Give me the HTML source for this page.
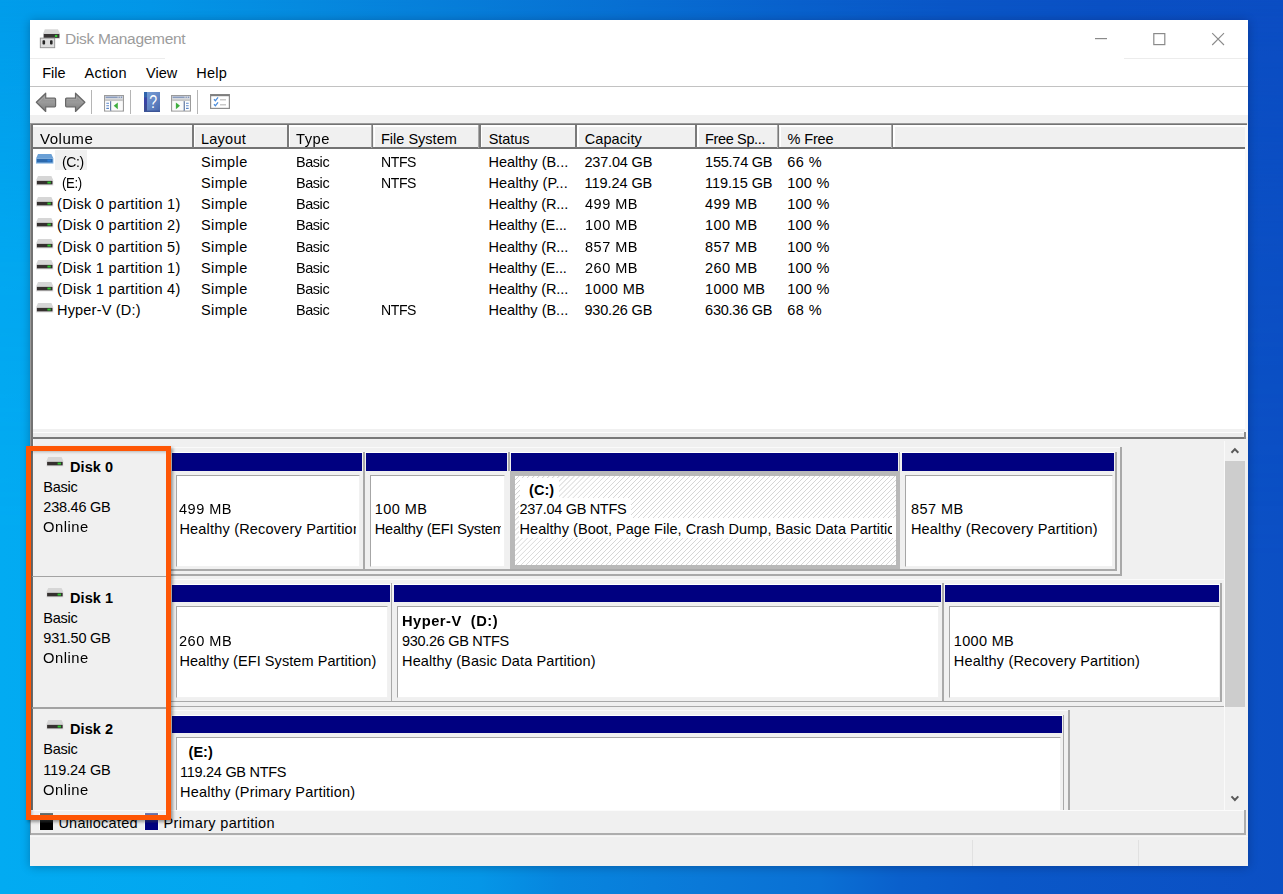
<!DOCTYPE html><html lang="en"><head><meta charset="utf-8"><title>Disk Management</title><style>

html,body{margin:0;padding:0}
body{width:1283px;height:894px;overflow:hidden;position:relative;font-family:"Liberation Sans",sans-serif;font-size:14.5px;color:#000;background:#0a62cc}
#root{position:absolute;left:0;top:0;width:1283px;height:894px;overflow:hidden}
#root div,#root svg{position:absolute}
#root span.t{position:absolute;white-space:pre;line-height:20px;height:20px}
#root div.c{overflow:hidden}

</style></head><body><div id="root">
<div style="left:0;top:0;width:1283px;height:894px;background:linear-gradient(to right,#019deb 0px,#0396e7 150px,#068adf 300px,#077fda 430px,#086ed2 640px,#0960cc 800px,#0a56c7 950px,#0a50c4 1100px,#0b4dc3 1283px)"></div>
<div style="left:0;top:0;width:1283px;height:894px;background:linear-gradient(to right,#02abf2 0px,#03a4ee 300px,#0596e7 480px,#0785de 560px,#0a79d8 700px,#0a70d4 820px,#0a60cc 900px,#0a58c8 1000px,#0b4fc4 1283px);-webkit-mask-image:linear-gradient(to bottom,rgba(0,0,0,0) 0px,rgba(0,0,0,.75) 260px,rgba(0,0,0,1) 560px);mask-image:linear-gradient(to bottom,rgba(0,0,0,0) 0px,rgba(0,0,0,.75) 260px,rgba(0,0,0,1) 560px)"></div>
<div style="left:30px;top:20px;width:1218px;height:846px;background:#fff;box-shadow:0 1px 9px rgba(0,0,30,.28)"></div>
<div style="left:30px;top:58px;width:135px;height:1px;background:#ececec;"></div>
<div style="left:1124px;top:58px;width:124px;height:1px;background:#ececec;"></div>
<div style="left:30px;top:85.6px;width:1218px;height:1.6px;background:#c2c2c2;"></div>
<div style="left:30px;top:115px;width:1218px;height:751px;background:#f0f0f0;"></div>
<svg style="left:1090px;top:28px" width="140" height="22" viewBox="0 0 140 22"><path d="M5 10.6H17" stroke="#8a8a8a" stroke-width="1.2" fill="none"/><rect x="63.8" y="5.6" width="11" height="11" stroke="#8a8a8a" stroke-width="1.2" fill="none"/><path d="M122.2 5.2L134 17M134 5.2L122.2 17" stroke="#8a8a8a" stroke-width="1.1" fill="none"/></svg>
<div style="left:91.2px;top:89.5px;width:1.2px;height:24.5px;background:#b5b5b5;"></div>
<div style="left:130.0px;top:89.5px;width:1.2px;height:24.5px;background:#b5b5b5;"></div>
<div style="left:197.3px;top:89.5px;width:1.2px;height:24.5px;background:#b5b5b5;"></div>
<div style="left:33px;top:125px;width:1212.3px;height:303.8px;background:#fff;"></div>
<div style="left:1245.3px;top:125px;width:2.7px;height:312px;background:#f9f9f9;"></div>
<div style="left:30.4px;top:123px;width:1216.2px;height:1px;background:#9a9a9a;"></div>
<div style="left:31.2px;top:123.6px;width:1215.4px;height:1.6px;background:#737373;"></div>
<div style="left:30.4px;top:123px;width:1px;height:712px;background:#9a9a9a;"></div>
<div style="left:31.2px;top:123.6px;width:1.5px;height:711.4px;background:#737373;"></div>
<div style="left:32.699999999999996px;top:432px;width:1px;height:378px;background:#fafafa;"></div>
<div style="left:33px;top:127.2px;width:1212.3px;height:20.4px;background:#f0f0f0;"></div>
<div style="left:33px;top:146.9px;width:1212.3px;height:2.1px;background:#737373;"></div>
<div style="left:191.5px;top:125.2px;width:1px;height:22.4px;background:#a9a9a9;"></div>
<div style="left:192.1px;top:125.2px;width:1.8px;height:22.4px;background:#7a7a7a;"></div>
<div style="left:193.9px;top:125.2px;width:1.4px;height:21.8px;background:#fff;"></div>
<div style="left:286.7px;top:125.2px;width:1px;height:22.4px;background:#a9a9a9;"></div>
<div style="left:287.3px;top:125.2px;width:1.8px;height:22.4px;background:#7a7a7a;"></div>
<div style="left:289.1px;top:125.2px;width:1.4px;height:21.8px;background:#fff;"></div>
<div style="left:371.09999999999997px;top:125.2px;width:1px;height:22.4px;background:#a9a9a9;"></div>
<div style="left:371.7px;top:125.2px;width:1.8px;height:22.4px;background:#7a7a7a;"></div>
<div style="left:373.5px;top:125.2px;width:1.4px;height:21.8px;background:#fff;"></div>
<div style="left:478.29999999999995px;top:125.2px;width:1px;height:22.4px;background:#a9a9a9;"></div>
<div style="left:478.9px;top:125.2px;width:1.8px;height:22.4px;background:#7a7a7a;"></div>
<div style="left:480.7px;top:125.2px;width:1.4px;height:21.8px;background:#fff;"></div>
<div style="left:574.8px;top:125.2px;width:1px;height:22.4px;background:#a9a9a9;"></div>
<div style="left:575.4px;top:125.2px;width:1.8px;height:22.4px;background:#7a7a7a;"></div>
<div style="left:577.1999999999999px;top:125.2px;width:1.4px;height:21.8px;background:#fff;"></div>
<div style="left:694.8px;top:125.2px;width:1px;height:22.4px;background:#a9a9a9;"></div>
<div style="left:695.4px;top:125.2px;width:1.8px;height:22.4px;background:#7a7a7a;"></div>
<div style="left:697.1999999999999px;top:125.2px;width:1.4px;height:21.8px;background:#fff;"></div>
<div style="left:777.1px;top:125.2px;width:1px;height:22.4px;background:#a9a9a9;"></div>
<div style="left:777.7px;top:125.2px;width:1.8px;height:22.4px;background:#7a7a7a;"></div>
<div style="left:779.5px;top:125.2px;width:1.4px;height:21.8px;background:#fff;"></div>
<div style="left:891.0px;top:125.2px;width:1px;height:22.4px;background:#a9a9a9;"></div>
<div style="left:891.6px;top:125.2px;width:1.8px;height:22.4px;background:#7a7a7a;"></div>
<div style="left:893.4px;top:125.2px;width:1.4px;height:21.8px;background:#fff;"></div>
<div style="left:55px;top:150.2px;width:32.4px;height:20px;background:#f0f0f0;"></div>
<div style="left:32.6px;top:433px;width:1212px;height:4.4px;background:#ececec;"></div>
<div style="left:32px;top:437.4px;width:1214px;height:1.8px;background:#787878;"></div>
<div style="left:1244.4px;top:432px;width:1.8px;height:7px;background:#8c8c8c;"></div>
<div style="left:32.6px;top:432px;width:1211.4px;height:1px;background:#fcfcfc;"></div>
<div style="left:31.6px;top:575.6px;width:136.4px;height:1.8px;background:#a3a3a3;"></div>
<div style="left:31.6px;top:706.8px;width:136.4px;height:1.8px;background:#a3a3a3;"></div>
<div style="left:171px;top:447.4px;width:950.0px;height:1px;background:#fafafa;"></div>
<div style="left:171px;top:452.2px;width:945.0px;height:1px;background:#fff;"></div>
<div style="left:172.0px;top:453.2px;width:190.0px;height:17.6px;background:#000080;"></div>
<div style="left:175.6px;top:474.7px;width:184.6px;height:92.1px;background:#fff;box-sizing:border-box;border-left:1.4px solid #a6a6a6;border-top:1.4px solid #a6a6a6;border-right:1.4px solid #f1f1f1;border-bottom:1.4px solid #f1f1f1"></div>
<div style="left:363.2px;top:452.0px;width:1.6px;height:118.6px;background:#a9a9a9;"></div>
<div style="left:366.0px;top:453.2px;width:140.9px;height:17.6px;background:#000080;"></div>
<div style="left:369.6px;top:474.7px;width:135.5px;height:92.1px;background:#fff;box-sizing:border-box;border-left:1.4px solid #a6a6a6;border-top:1.4px solid #a6a6a6;border-right:1.4px solid #f1f1f1;border-bottom:1.4px solid #f1f1f1"></div>
<div style="left:508.1px;top:452.0px;width:1.6px;height:19.2px;background:#a9a9a9;"></div>
<div style="left:510.9px;top:453.2px;width:386.7px;height:17.6px;background:#000080;"></div>
<div style="left:509.6px;top:471.2px;width:390.3px;height:98.8px;background:repeating-linear-gradient(135deg,#fff 0px,#fff 2.75px,#d6d6d6 2.8px,#d6d6d6 3.44px,#fff 3.54px);box-sizing:border-box;border:5px solid #b9b9b9;border-right-width:4px"></div>
<div style="left:899.0px;top:452.0px;width:1px;height:19.2px;background:#a9a9a9;"></div>
<div style="left:901.6px;top:453.2px;width:212.4px;height:17.6px;background:#000080;"></div>
<div style="left:905.2px;top:474.7px;width:208.3px;height:92.1px;background:#fff;box-sizing:border-box;border-left:1.4px solid #a6a6a6;border-top:1.4px solid #a6a6a6;border-right:1.4px solid #f1f1f1;border-bottom:1.4px solid #f1f1f1"></div>
<div style="left:1115.2px;top:452.0px;width:1.6px;height:118.6px;background:#a9a9a9;"></div>
<div style="left:171px;top:569.2px;width:945.8px;height:1.5px;background:#a9a9a9;"></div>
<div style="left:171px;top:574.2px;width:950.8px;height:1.5px;background:#a9a9a9;"></div>
<div style="left:1120.2px;top:447.4px;width:1.6px;height:128.3px;background:#a9a9a9;"></div>
<div style="left:171px;top:578.7px;width:1053.6px;height:1px;background:#fafafa;"></div>
<div style="left:171px;top:583.5px;width:1050.1px;height:1px;background:#fff;"></div>
<div style="left:172.0px;top:584.5px;width:217.7px;height:17.6px;background:#000080;"></div>
<div style="left:175.6px;top:606.0px;width:212.3px;height:92.1px;background:#fff;box-sizing:border-box;border-left:1.4px solid #a6a6a6;border-top:1.4px solid #a6a6a6;border-right:1.4px solid #f1f1f1;border-bottom:1.4px solid #f1f1f1"></div>
<div style="left:390.9px;top:583.3px;width:1.6px;height:118.6px;background:#a9a9a9;"></div>
<div style="left:393.7px;top:584.5px;width:547.5px;height:17.6px;background:#000080;"></div>
<div style="left:397.3px;top:606.0px;width:542.1px;height:92.1px;background:#fff;box-sizing:border-box;border-left:1.4px solid #a6a6a6;border-top:1.4px solid #a6a6a6;border-right:1.4px solid #f1f1f1;border-bottom:1.4px solid #f1f1f1"></div>
<div style="left:942.4px;top:583.3px;width:1.6px;height:118.6px;background:#a9a9a9;"></div>
<div style="left:945.2px;top:584.5px;width:273.9px;height:17.6px;background:#000080;"></div>
<div style="left:948.8px;top:606.0px;width:271.5px;height:92.1px;background:#fff;box-sizing:border-box;border-left:1.4px solid #a6a6a6;border-top:1.4px solid #a6a6a6;border-right:1.4px solid #f1f1f1;border-bottom:1.4px solid #f1f1f1"></div>
<div style="left:1220.3px;top:583.3px;width:1.6px;height:118.6px;background:#a9a9a9;"></div>
<div style="left:171px;top:700.5px;width:1050.9px;height:1.5px;background:#a9a9a9;"></div>
<div style="left:171px;top:705.5px;width:1053.4px;height:1.5px;background:#a9a9a9;"></div>
<div class="c" style="left:171px;top:700px;width:1054px;height:110.4px">
<div style="left:0.0px;top:10.0px;width:897.8px;height:1px;background:#fafafa;"></div>
<div style="left:0.0px;top:14.8px;width:892.6px;height:1px;background:#fff;"></div>
<div style="left:1.0px;top:15.8px;width:889.6px;height:17.6px;background:#000080;"></div>
<div style="left:4.6px;top:37.3px;width:885.5px;height:92.1px;background:#fff;box-sizing:border-box;border-left:1.4px solid #a6a6a6;border-top:1.4px solid #a6a6a6;border-right:1.4px solid #f1f1f1;border-bottom:1.4px solid #f1f1f1"></div>
<div style="left:891.8px;top:14.6px;width:1.6px;height:118.6px;background:#a9a9a9;"></div>
<div style="left:0.0px;top:131.8px;width:893.4px;height:1.5px;background:#a9a9a9;"></div>
<div style="left:0.0px;top:136.8px;width:898.6px;height:1.5px;background:#a9a9a9;"></div>
<div style="left:897.0px;top:10.0px;width:1.6px;height:128.3px;background:#a9a9a9;"></div>
</div>
<div style="left:520px;top:478.2px;width:38.7px;height:19.8px;background:#fff;"></div>
<div style="left:519.4px;top:498px;width:111.8px;height:20.4px;background:#fff;"></div>
<div style="left:519.4px;top:518.4px;width:376.4px;height:20px;background:#fff;"></div>
<div style="left:1224.8px;top:440px;width:20.2px;height:370.4px;background:#f0f0f0;"></div>
<div style="left:1224.8px;top:461px;width:20.2px;height:246px;background:#cdcdcd;"></div>
<div style="left:1223.8px;top:441px;width:1px;height:369px;background:#fafafa;"></div>
<svg style="left:1224.8px;top:440px" width="20" height="370" viewBox="0 0 20 370"><path d="M6.5 12.7L9.9 9.1L13.3 12.7" stroke="#595959" stroke-width="2" fill="none"/><path d="M6.5 356.4L9.9 360L13.3 356.4" stroke="#595959" stroke-width="2" fill="none"/></svg>
<div style="left:31.4px;top:810.4px;width:1213.4px;height:23px;background:#f0f0f0;"></div>
<div style="left:31px;top:833.2px;width:1215px;height:1.8px;background:#adadad;"></div>
<div style="left:1244.4px;top:810.4px;width:1.8px;height:24.6px;background:#adadad;"></div>
<div style="left:31.4px;top:809.9px;width:1213.0px;height:1px;background:#fbfbfb;"></div>
<div style="left:38.6px;top:812.6px;width:14.8px;height:17.8px;background:#fbfbfb;"></div>
<div style="left:143.8px;top:812.6px;width:14.8px;height:17.8px;background:#fbfbfb;"></div>
<div style="left:39.5px;top:813.4px;width:13.1px;height:16.2px;background:linear-gradient(to bottom,#6e7a7a 0%,#3c4242 35%,#000 62%);"></div>
<div style="left:144.7px;top:813.4px;width:13.1px;height:16.2px;background:linear-gradient(to bottom,#7880b0 0%,#3c4298 35%,#000080 62%);"></div>
<div style="left:972px;top:840px;width:1px;height:26px;background:#e1e1e1;"></div>
<div style="left:1138px;top:840px;width:1px;height:26px;background:#e1e1e1;"></div>
<div style="left:30px;top:836px;width:1218px;height:1px;background:#f7f7f7;"></div>
<svg style="left:39px;top:28px" width="22" height="21" viewBox="0 0 22 21"><path d="M5.8 1.2H19L20.9 5.6V10.4H4.2V5.6Z" fill="#d7d7d7"/><path d="M4.2 5.7H20.9V10.4H4.2Z" fill="#c9c9c9"/><path d="M4.8 6H20.3V9.9H4.8Z" fill="#383435"/><rect x="15.9" y="6.9" width="2.4" height="2.2" fill="#35cc35"/><rect x="1.3" y="10.1" width="14.4" height="9.6" fill="#dedede" stroke="#8f8f8f" stroke-width=".9"/><rect x="3.5" y="12.2" width="2.6" height="4.2" rx=".9" fill="#262626"/><rect x="11" y="12.2" width="2.6" height="4.2" rx=".9" fill="#262626"/></svg>
<svg width="0" height="0" style="left:0;top:0"><defs><linearGradient id="ag" x1="0" y1="0" x2="0" y2="1"><stop offset="0" stop-color="#8e8e8e"/><stop offset=".5" stop-color="#9a9a9a"/><stop offset="1" stop-color="#7c7c7c"/></linearGradient></defs></svg>
<svg style="left:35px;top:92px" width="22" height="21" viewBox="0 0 22 21"><path d="M1.3 10.3L10.7 1.2V6.2H19.6Q20.6 6.2 20.6 7.2V13.8Q20.6 14.8 19.6 14.8H10.7V19.5Z" fill="url(#ag)" stroke="#686868" stroke-width="1.2" stroke-linejoin="round"/><path d="M3.6 10.3L9.6 4.4V7.4H19.2" stroke="#a8a8a8" stroke-width=".8" fill="none"/></svg>
<svg style="left:64px;top:92px" width="22" height="21" viewBox="0 0 22 21"><path d="M20.9 10.3L11.5 1.2V6.2H2.6Q1.6 6.2 1.6 7.2V13.8Q1.6 14.8 2.6 14.8H11.5V19.5Z" fill="url(#ag)" stroke="#686868" stroke-width="1.2" stroke-linejoin="round"/><path d="M3 7.4H12.6V4.4L18.6 10.3" stroke="#a8a8a8" stroke-width=".8" fill="none"/></svg>
<svg style="left:103.8px;top:95.4px" width="20" height="16.6" viewBox="0 0 20 16.6"><rect x=".6" y=".6" width="18.8" height="15.4" fill="#f4f4f4" stroke="#9b9b9b" stroke-width="1.2"/><rect x="1.2" y="1.2" width="17.6" height="3.6" fill="#d5d8de"/><path d="M1.6 2.2H13.6" stroke="#5b78ad" stroke-width=".9"/><path d="M14.6 2.2H15.8M16.8 2.2H18.2" stroke="#5b78ad" stroke-width="1"/><rect x="1.2" y="4.2" width="17.6" height="2" fill="#c6c6c6"/><rect x="1.2" y="6.2" width="5" height="9.2" fill="#fff"/><rect x="6.1" y="6.2" width="1.3" height="9.4" fill="#556e9c"/><rect x="7.4" y="6.2" width="11.2" height="9.2" fill="#fafafa"/><path d="M2.3 8.2H5M2.3 10.8H5M2.3 13.4H5" stroke="#5b86c9" stroke-width="1.1"/><path d="M9.7 10.8L13.8 7.4V14.2Z" fill="#3fae3f"/></svg>
<svg style="left:171.2px;top:95.4px" width="20" height="16.6" viewBox="0 0 20 16.6"><rect x=".6" y=".6" width="18.8" height="15.4" fill="#f4f4f4" stroke="#9b9b9b" stroke-width="1.2"/><rect x="1.2" y="1.2" width="17.6" height="3.6" fill="#d5d8de"/><path d="M1.6 2.2H13.6" stroke="#5b78ad" stroke-width=".9"/><path d="M14.6 2.2H15.8M16.8 2.2H18.2" stroke="#5b78ad" stroke-width="1"/><rect x="1.2" y="4.2" width="17.6" height="2" fill="#c6c6c6"/><rect x="13.8" y="6.2" width="5" height="9.2" fill="#fff"/><rect x="12.5" y="6.2" width="1.3" height="9.4" fill="#556e9c"/><rect x="1.4" y="6.2" width="11" height="9.2" fill="#fafafa"/><path d="M15 8.2H17.7M15 10.8H17.7M15 13.4H17.7" stroke="#5b86c9" stroke-width="1.1"/><path d="M9 10.8L4.9 7.4V14.2Z" fill="#3fae3f"/></svg>
<svg style="left:143.8px;top:91.8px" width="16.4" height="20" viewBox="0 0 16.4 20"><defs><linearGradient id="hg" x1="0" y1="0" x2="1" y2="1"><stop offset="0" stop-color="#7aa0d6"/><stop offset=".55" stop-color="#6285c4"/><stop offset="1" stop-color="#4564aa"/></linearGradient></defs><rect width="16.4" height="20" fill="url(#hg)"/><rect width="3" height="20" fill="#3a44a4"/><rect width="3" height="5.4" fill="#2f64ac"/><rect y="12.4" width="3" height="7.6" fill="#3b4a94"/><rect y="18.6" width="16.4" height="1.4" fill="#3c5596"/><text transform="translate(9.1 16.5) scale(.76 1)" font-family="Liberation Sans,sans-serif" font-size="18.6" fill="#fff" text-anchor="middle">?</text></svg>
<svg style="left:210px;top:94.2px" width="20" height="15" viewBox="0 0 20 15"><rect x=".6" y=".6" width="18.8" height="13.8" fill="#fff" stroke="#8d8d8d" stroke-width="1.2"/><rect x=".6" y=".4" width="18.8" height="1.8" fill="#7f7f7f"/><path d="M4 5.2L5.4 6.8L8 3.4M4 10.2L5.4 11.8L8 8.4" stroke="#4c8ddb" stroke-width="1.3" fill="none"/><path d="M10 5.8H16M10 10.8H16" stroke="#c9c9c9" stroke-width="1.4"/></svg>
<svg style="left:36.3px;top:154.3px" width="17.4" height="10.4" viewBox="0 0 17.4 10.4"><path d="M2 0H15.4L17.4 4.6H0Z" fill="#6aa0d6"/><rect x="0" y="4.4" width="17.4" height="5.2" fill="#7fb0e0"/><rect x=".9" y="4.8" width="15.6" height="3.6" fill="#2b69ad"/><rect x="11.4" y="5.6" width="3.4" height="1.9" fill="#2f7fd8"/></svg>
<svg style="left:36.3px;top:175.5px" width="17.4" height="10.4" viewBox="0 0 17.4 10.4"><path d="M2 0H15.4L17.4 4.6H0Z" fill="#d6d6d6"/><rect x="0" y="4.4" width="17.4" height="5.2" fill="#e4e4e4"/><rect x=".9" y="4.8" width="15.6" height="3.6" fill="#35302f"/><rect x="11.4" y="5.6" width="3.4" height="1.9" fill="#2fc52f"/></svg>
<svg style="left:36.3px;top:196.7px" width="17.4" height="10.4" viewBox="0 0 17.4 10.4"><path d="M2 0H15.4L17.4 4.6H0Z" fill="#d6d6d6"/><rect x="0" y="4.4" width="17.4" height="5.2" fill="#e4e4e4"/><rect x=".9" y="4.8" width="15.6" height="3.6" fill="#35302f"/><rect x="11.4" y="5.6" width="3.4" height="1.9" fill="#2fc52f"/></svg>
<svg style="left:36.3px;top:217.9px" width="17.4" height="10.4" viewBox="0 0 17.4 10.4"><path d="M2 0H15.4L17.4 4.6H0Z" fill="#d6d6d6"/><rect x="0" y="4.4" width="17.4" height="5.2" fill="#e4e4e4"/><rect x=".9" y="4.8" width="15.6" height="3.6" fill="#35302f"/><rect x="11.4" y="5.6" width="3.4" height="1.9" fill="#2fc52f"/></svg>
<svg style="left:36.3px;top:239.1px" width="17.4" height="10.4" viewBox="0 0 17.4 10.4"><path d="M2 0H15.4L17.4 4.6H0Z" fill="#d6d6d6"/><rect x="0" y="4.4" width="17.4" height="5.2" fill="#e4e4e4"/><rect x=".9" y="4.8" width="15.6" height="3.6" fill="#35302f"/><rect x="11.4" y="5.6" width="3.4" height="1.9" fill="#2fc52f"/></svg>
<svg style="left:36.3px;top:260.3px" width="17.4" height="10.4" viewBox="0 0 17.4 10.4"><path d="M2 0H15.4L17.4 4.6H0Z" fill="#d6d6d6"/><rect x="0" y="4.4" width="17.4" height="5.2" fill="#e4e4e4"/><rect x=".9" y="4.8" width="15.6" height="3.6" fill="#35302f"/><rect x="11.4" y="5.6" width="3.4" height="1.9" fill="#2fc52f"/></svg>
<svg style="left:36.3px;top:281.5px" width="17.4" height="10.4" viewBox="0 0 17.4 10.4"><path d="M2 0H15.4L17.4 4.6H0Z" fill="#d6d6d6"/><rect x="0" y="4.4" width="17.4" height="5.2" fill="#e4e4e4"/><rect x=".9" y="4.8" width="15.6" height="3.6" fill="#35302f"/><rect x="11.4" y="5.6" width="3.4" height="1.9" fill="#2fc52f"/></svg>
<svg style="left:36.3px;top:302.7px" width="17.4" height="10.4" viewBox="0 0 17.4 10.4"><path d="M2 0H15.4L17.4 4.6H0Z" fill="#d6d6d6"/><rect x="0" y="4.4" width="17.4" height="5.2" fill="#e4e4e4"/><rect x=".9" y="4.8" width="15.6" height="3.6" fill="#35302f"/><rect x="11.4" y="5.6" width="3.4" height="1.9" fill="#2fc52f"/></svg>
<svg style="left:46.3px;top:457.2px" width="17.8" height="10.4" viewBox="0 0 17.4 10.4"><path d="M2 0H15.4L17.4 4.6H0Z" fill="#d6d6d6"/><rect x="0" y="4.4" width="17.4" height="5.2" fill="#e4e4e4"/><rect x=".9" y="4.8" width="15.6" height="3.6" fill="#35302f"/><rect x="11.4" y="5.6" width="3.4" height="1.9" fill="#2fc52f"/></svg>
<svg style="left:46.3px;top:588.4px" width="17.8" height="10.4" viewBox="0 0 17.4 10.4"><path d="M2 0H15.4L17.4 4.6H0Z" fill="#d6d6d6"/><rect x="0" y="4.4" width="17.4" height="5.2" fill="#e4e4e4"/><rect x=".9" y="4.8" width="15.6" height="3.6" fill="#35302f"/><rect x="11.4" y="5.6" width="3.4" height="1.9" fill="#2fc52f"/></svg>
<svg style="left:46.3px;top:719.6px" width="17.8" height="10.4" viewBox="0 0 17.4 10.4"><path d="M2 0H15.4L17.4 4.6H0Z" fill="#d6d6d6"/><rect x="0" y="4.4" width="17.4" height="5.2" fill="#e4e4e4"/><rect x=".9" y="4.8" width="15.6" height="3.6" fill="#35302f"/><rect x="11.4" y="5.6" width="3.4" height="1.9" fill="#2fc52f"/></svg>
<span class="t" id="t0" style="left:65.0px;top:29.1px;font-size:15.5px;color:#9c9c9c;letter-spacing:-0.309px;">Disk Management</span>
<span class="t" id="t1" style="left:42.2px;top:63.0px;letter-spacing:0.008px;">File</span>
<span class="t" id="t2" style="left:84.6px;top:63.0px;letter-spacing:0.338px;">Action</span>
<span class="t" id="t3" style="left:146.0px;top:63.0px;letter-spacing:0.009px;">View</span>
<span class="t" id="t4" style="left:196.2px;top:63.0px;letter-spacing:0.257px;">Help</span>
<span class="t" id="t5" style="left:39.6px;top:128.8px;transform:scaleX(1.0399);transform-origin:0 50%;letter-spacing:0.480px;">Volume</span>
<span class="t" id="t6" style="left:200.9px;top:128.8px;letter-spacing:0.271px;">Layout</span>
<span class="t" id="t7" style="left:295.9px;top:128.8px;transform:scaleX(1.0159);transform-origin:0 50%;letter-spacing:0.480px;">Type</span>
<span class="t" id="t8" style="left:381.0px;top:128.8px;letter-spacing:0.005px;">File System</span>
<span class="t" id="t9" style="left:488.7px;top:128.8px;letter-spacing:-0.042px;">Status</span>
<span class="t" id="t10" style="left:584.7px;top:128.8px;letter-spacing:0.097px;">Capacity</span>
<span class="t" id="t11" style="left:705.1px;top:128.8px;letter-spacing:-0.364px;">Free Sp...</span>
<span class="t" id="t12" style="left:787.5px;top:128.8px;letter-spacing:-0.130px;">% Free</span>
<span class="t" id="t13" style="left:61.5px;top:151.7px;transform:scaleX(0.9646);transform-origin:0 50%;letter-spacing:-0.420px;">(C:)</span>
<span class="t" id="t14" style="left:201.0px;top:151.7px;letter-spacing:0.374px;">Simple</span>
<span class="t" id="t15" style="left:296.2px;top:151.7px;transform:scaleX(0.9944);transform-origin:0 50%;letter-spacing:-0.420px;">Basic</span>
<span class="t" id="t16" style="left:381.1px;top:151.7px;transform:scaleX(0.9700);transform-origin:0 50%;letter-spacing:-0.420px;">NTFS</span>
<span class="t" id="t17" style="left:488.5px;top:151.7px;letter-spacing:-0.007px;">Healthy (B...</span>
<span class="t" id="t18" style="left:584.5px;top:151.7px;letter-spacing:-0.191px;">237.04 GB</span>
<span class="t" id="t19" style="left:705.1px;top:151.7px;letter-spacing:-0.241px;">155.74 GB</span>
<span class="t" id="t20" style="left:787.2px;top:151.7px;letter-spacing:0.446px;">66 %</span>
<span class="t" id="t21" style="left:61.5px;top:172.9px;transform:scaleX(0.9095);transform-origin:0 50%;letter-spacing:-0.420px;">(E:)</span>
<span class="t" id="t22" style="left:201.0px;top:172.9px;letter-spacing:0.374px;">Simple</span>
<span class="t" id="t23" style="left:296.2px;top:172.9px;transform:scaleX(0.9944);transform-origin:0 50%;letter-spacing:-0.420px;">Basic</span>
<span class="t" id="t24" style="left:381.1px;top:172.9px;transform:scaleX(0.9700);transform-origin:0 50%;letter-spacing:-0.420px;">NTFS</span>
<span class="t" id="t25" style="left:488.5px;top:172.9px;letter-spacing:0.107px;">Healthy (P...</span>
<span class="t" id="t26" style="left:584.5px;top:172.9px;letter-spacing:-0.058px;">119.24 GB</span>
<span class="t" id="t27" style="left:705.1px;top:172.9px;letter-spacing:-0.108px;">119.15 GB</span>
<span class="t" id="t28" style="left:787.2px;top:172.9px;letter-spacing:0.269px;">100 %</span>
<span class="t" id="t29" style="left:57.0px;top:194.1px;letter-spacing:0.297px;">(Disk 0 partition 1)</span>
<span class="t" id="t30" style="left:201.0px;top:194.1px;letter-spacing:0.374px;">Simple</span>
<span class="t" id="t31" style="left:296.2px;top:194.1px;transform:scaleX(0.9944);transform-origin:0 50%;letter-spacing:-0.420px;">Basic</span>
<span class="t" id="t32" style="left:488.5px;top:194.1px;letter-spacing:-0.066px;">Healthy (R...</span>
<span class="t" id="t33" style="left:584.5px;top:194.1px;transform:scaleX(1.0022);transform-origin:0 50%;letter-spacing:0.480px;">499 MB</span>
<span class="t" id="t34" style="left:705.1px;top:194.1px;letter-spacing:0.423px;">499 MB</span>
<span class="t" id="t35" style="left:787.2px;top:194.1px;letter-spacing:0.269px;">100 %</span>
<span class="t" id="t36" style="left:57.0px;top:215.3px;letter-spacing:0.297px;">(Disk 0 partition 2)</span>
<span class="t" id="t37" style="left:201.0px;top:215.3px;letter-spacing:0.374px;">Simple</span>
<span class="t" id="t38" style="left:296.2px;top:215.3px;transform:scaleX(0.9944);transform-origin:0 50%;letter-spacing:-0.420px;">Basic</span>
<span class="t" id="t39" style="left:488.5px;top:215.3px;letter-spacing:-0.115px;">Healthy (E...</span>
<span class="t" id="t40" style="left:584.5px;top:215.3px;transform:scaleX(1.0022);transform-origin:0 50%;letter-spacing:0.480px;">100 MB</span>
<span class="t" id="t41" style="left:705.1px;top:215.3px;letter-spacing:0.423px;">100 MB</span>
<span class="t" id="t42" style="left:787.2px;top:215.3px;letter-spacing:0.269px;">100 %</span>
<span class="t" id="t43" style="left:57.0px;top:236.5px;letter-spacing:0.297px;">(Disk 0 partition 5)</span>
<span class="t" id="t44" style="left:201.0px;top:236.5px;letter-spacing:0.374px;">Simple</span>
<span class="t" id="t45" style="left:296.2px;top:236.5px;transform:scaleX(0.9944);transform-origin:0 50%;letter-spacing:-0.420px;">Basic</span>
<span class="t" id="t46" style="left:488.5px;top:236.5px;letter-spacing:-0.066px;">Healthy (R...</span>
<span class="t" id="t47" style="left:584.5px;top:236.5px;transform:scaleX(1.0022);transform-origin:0 50%;letter-spacing:0.480px;">857 MB</span>
<span class="t" id="t48" style="left:705.1px;top:236.5px;letter-spacing:0.423px;">857 MB</span>
<span class="t" id="t49" style="left:787.2px;top:236.5px;letter-spacing:0.269px;">100 %</span>
<span class="t" id="t50" style="left:57.0px;top:257.7px;letter-spacing:0.297px;">(Disk 1 partition 1)</span>
<span class="t" id="t51" style="left:201.0px;top:257.7px;letter-spacing:0.374px;">Simple</span>
<span class="t" id="t52" style="left:296.2px;top:257.7px;transform:scaleX(0.9944);transform-origin:0 50%;letter-spacing:-0.420px;">Basic</span>
<span class="t" id="t53" style="left:488.5px;top:257.7px;letter-spacing:-0.115px;">Healthy (E...</span>
<span class="t" id="t54" style="left:584.5px;top:257.7px;transform:scaleX(1.0022);transform-origin:0 50%;letter-spacing:0.480px;">260 MB</span>
<span class="t" id="t55" style="left:705.1px;top:257.7px;letter-spacing:0.423px;">260 MB</span>
<span class="t" id="t56" style="left:787.2px;top:257.7px;letter-spacing:0.269px;">100 %</span>
<span class="t" id="t57" style="left:57.0px;top:278.9px;letter-spacing:0.297px;">(Disk 1 partition 4)</span>
<span class="t" id="t58" style="left:201.0px;top:278.9px;letter-spacing:0.374px;">Simple</span>
<span class="t" id="t59" style="left:296.2px;top:278.9px;transform:scaleX(0.9944);transform-origin:0 50%;letter-spacing:-0.420px;">Basic</span>
<span class="t" id="t60" style="left:488.5px;top:278.9px;letter-spacing:-0.066px;">Healthy (R...</span>
<span class="t" id="t61" style="left:584.5px;top:278.9px;letter-spacing:0.376px;">1000 MB</span>
<span class="t" id="t62" style="left:705.1px;top:278.9px;letter-spacing:0.309px;">1000 MB</span>
<span class="t" id="t63" style="left:787.2px;top:278.9px;letter-spacing:0.269px;">100 %</span>
<span class="t" id="t64" style="left:57.0px;top:300.1px;letter-spacing:0.193px;">Hyper-V (D:)</span>
<span class="t" id="t65" style="left:201.0px;top:300.1px;letter-spacing:0.374px;">Simple</span>
<span class="t" id="t66" style="left:296.2px;top:300.1px;transform:scaleX(0.9944);transform-origin:0 50%;letter-spacing:-0.420px;">Basic</span>
<span class="t" id="t67" style="left:381.1px;top:300.1px;transform:scaleX(0.9700);transform-origin:0 50%;letter-spacing:-0.420px;">NTFS</span>
<span class="t" id="t68" style="left:488.5px;top:300.1px;letter-spacing:-0.007px;">Healthy (B...</span>
<span class="t" id="t69" style="left:584.5px;top:300.1px;letter-spacing:-0.191px;">930.26 GB</span>
<span class="t" id="t70" style="left:705.1px;top:300.1px;letter-spacing:-0.241px;">630.36 GB</span>
<span class="t" id="t71" style="left:787.2px;top:300.1px;letter-spacing:0.446px;">68 %</span>
<span class="t" id="t72" style="left:70.0px;top:457.0px;font-weight:bold;letter-spacing:0.093px;">Disk 0</span>
<span class="t" id="t73" style="left:43.3px;top:477.0px;letter-spacing:-0.267px;">Basic</span>
<span class="t" id="t74" style="left:43.3px;top:497.2px;letter-spacing:-0.229px;">238.46 GB</span>
<span class="t" id="t75" style="left:43.3px;top:517.2px;transform:scaleX(1.0176);transform-origin:0 50%;letter-spacing:0.480px;">Online</span>
<span class="t" id="t76" style="left:70.0px;top:588.2px;font-weight:bold;letter-spacing:0.093px;">Disk 1</span>
<span class="t" id="t77" style="left:43.3px;top:608.2px;letter-spacing:-0.267px;">Basic</span>
<span class="t" id="t78" style="left:43.3px;top:628.4px;letter-spacing:-0.229px;">931.50 GB</span>
<span class="t" id="t79" style="left:43.3px;top:648.4px;transform:scaleX(1.0176);transform-origin:0 50%;letter-spacing:0.480px;">Online</span>
<span class="t" id="t80" style="left:70.0px;top:719.4px;font-weight:bold;letter-spacing:0.093px;">Disk 2</span>
<span class="t" id="t81" style="left:43.3px;top:739.4px;letter-spacing:-0.267px;">Basic</span>
<span class="t" id="t82" style="left:43.3px;top:759.6px;letter-spacing:-0.096px;">119.24 GB</span>
<span class="t" id="t83" style="left:43.3px;top:779.6px;transform:scaleX(1.0176);transform-origin:0 50%;letter-spacing:0.480px;">Online</span>
<span class="t" id="t84" style="left:179.4px;top:499.3px;transform:scaleX(1.0022);transform-origin:0 50%;letter-spacing:0.480px;">499 MB</span>
<div class="c" style="left:176px;top:519.4px;width:179.8px;height:20px"><span class="t" id="t85" style="left:3.4px;top:0px;letter-spacing:0.195px;">Healthy (Recovery Partition)</span></div>
<span class="t" id="t86" style="left:374.8px;top:499.3px;letter-spacing:0.423px;">100 MB</span>
<div class="c" style="left:371px;top:519.4px;width:129.7px;height:20px"><span class="t" id="t87" style="left:3.8px;top:0px;letter-spacing:-0.166px;">Healthy (EFI System Partition)</span></div>
<span class="t" id="t88" style="left:529.0px;top:479.6px;font-weight:bold;letter-spacing:0.077px;">(C:)</span>
<span class="t" id="t89" style="left:519.6px;top:499.3px;letter-spacing:-0.325px;">237.04 GB NTFS</span>
<div class="c" style="left:516px;top:519.4px;width:376.3px;height:20px"><span class="t" id="t90" style="left:3.6px;top:0px;letter-spacing:0.034px;">Healthy (Boot, Page File, Crash Dump, Basic Data Partition)</span></div>
<span class="t" id="t91" style="left:910.9px;top:499.3px;letter-spacing:0.463px;">857 MB</span>
<span class="t" id="t92" style="left:910.9px;top:519.4px;letter-spacing:0.195px;">Healthy (Recovery Partition)</span>
<span class="t" id="t93" style="left:179.4px;top:630.6px;transform:scaleX(1.0060);transform-origin:0 50%;letter-spacing:0.480px;">260 MB</span>
<span class="t" id="t94" style="left:179.4px;top:650.7px;letter-spacing:0.066px;">Healthy (EFI System Partition)</span>
<span class="t" id="t95" style="left:402.1px;top:611.1px;font-weight:bold;transform:scaleX(1.0129);transform-origin:0 50%;letter-spacing:0.480px;">Hyper-V  (D:)</span>
<span class="t" id="t96" style="left:402.1px;top:630.6px;letter-spacing:-0.309px;">930.26 GB NTFS</span>
<span class="t" id="t97" style="left:402.1px;top:650.7px;letter-spacing:0.111px;">Healthy (Basic Data Partition)</span>
<span class="t" id="t98" style="left:953.8px;top:630.6px;letter-spacing:0.326px;">1000 MB</span>
<span class="t" id="t99" style="left:953.8px;top:650.7px;letter-spacing:0.177px;">Healthy (Recovery Partition)</span>
<span class="t" id="t100" style="left:188.6px;top:742.4px;font-weight:bold;letter-spacing:0.009px;">(E:)</span>
<span class="t" id="t101" style="left:180.1px;top:761.9px;letter-spacing:-0.288px;">119.24 GB NTFS</span>
<span class="t" id="t102" style="left:180.1px;top:782.0px;letter-spacing:0.188px;">Healthy (Primary Partition)</span>
<span class="t" id="t103" style="left:58.4px;top:813.3px;letter-spacing:0.262px;">Unallocated</span>
<span class="t" id="t104" style="left:163.6px;top:813.3px;letter-spacing:0.340px;">Primary partition</span>
<div style="left:26.3px;top:445.9px;width:145.1px;height:374px;box-sizing:border-box;border:5.1px solid #fe5605;box-shadow:2px 2px 3px rgba(0,0,0,.38),inset 2px 2px 3px -1px rgba(0,0,0,.25)"></div>
</div></body></html>
